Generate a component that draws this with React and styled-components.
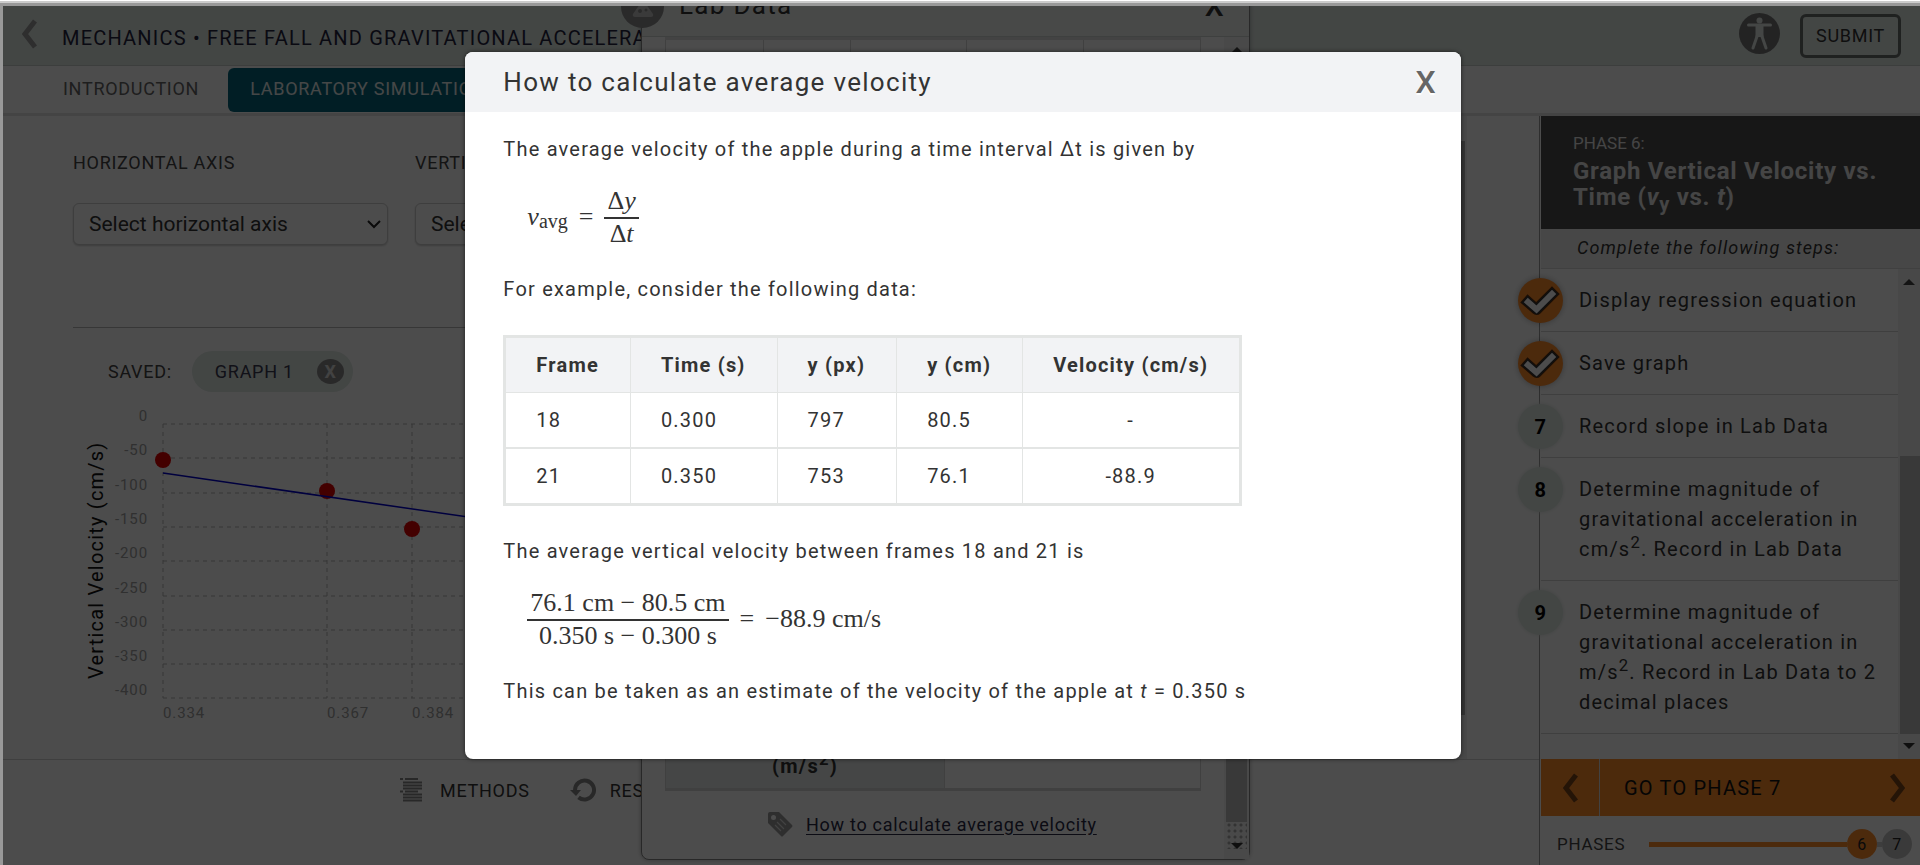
import React from 'react';
import styled, { createGlobalStyle, css } from 'styled-components';

//

const steps = [
  { id: 5, done: true, text: 'Display regression equation' },
  { id: 6, done: true, text: 'Save graph' },
  { id: 7, text: 'Record slope in Lab Data' },
  {
    id: 8,
    text: (
      <>
        Determine magnitude of gravitational acceleration in cm/s<sup>2</sup>.
        Record in Lab Data
      </>
    ),
  },
  {
    id: 9,
    text: (
      <>
        Determine magnitude of gravitational acceleration in m/s<sup>2</sup>.
        Record in Lab Data to 2 decimal places
      </>
    ),
  },
];

const rows = [
  ['18', '0.300', '797', '80.5', '-'],
  ['21', '0.350', '753', '76.1', '-88.9'],
];

const yTicks = [0, -50, -100, -150, -200, -250, -300, -350, -400];
const xTicks = [
  { label: '0.334', x: 90 },
  { label: '0.367', x: 254 },
  { label: '0.384', x: 339 },
];
const points = [
  [90, 51],
  [254, 82],
  [339, 120],
];

const tickY = (i) => 15 + Math.round(i * 34.3);

const Chevron = ({ flip, size = 30 }) => (
  <svg width={size / 2} height={size} viewBox="0 0 15 30" aria-hidden="true">
    <path
      d={flip ? 'M2 2l10 13L2 28' : 'M13 2L3 15l10 13'}
      fill="none"
      stroke="currentColor"
      strokeWidth="5"
    />
  </svg>
);

const Check = () => (
  <svg width="45" height="45" viewBox="0 0 45 45" aria-hidden="true">
    <g fill="none" strokeLinecap="square">
      <path
        d="M10 24l8.500 7.500L34 16"
        stroke="#5a3010"
        strokeWidth="11"
        strokeLinejoin="round"
      />
      <path
        d="M10 24l8.500 7.500L34 16"
        stroke="#333"
        strokeWidth="9"
        strokeLinejoin="round"
      />
      <path d="M10 24l8.500 7.500L34 16" stroke="#fff" strokeWidth="6" />
    </g>
  </svg>
);

const Chart = () => (
  <ChartSvg role="img" aria-label="Vertical velocity against time">
    <text className="title" transform="translate(30 270) rotate(-90)">
      Vertical Velocity (cm/s)
    </text>
    {yTicks.map((tick, i) => (
      <g key={tick}>
        <line className="grid" x1="90" x2="100%" y1={tickY(i)} y2={tickY(i)} />
        <text className="tick" x="75" y={tickY(i) - 3} textAnchor="end">
          {tick}
        </text>
      </g>
    ))}
    {xTicks.map(({ label, x }) => (
      <g key={label}>
        <line className="grid" x1={x} x2={x} y1="15" y2="289" />
        <text className="tick" x={x} y="309">
          {label}
        </text>
      </g>
    ))}
    {points.map(([x, y]) => (
      <circle key={x} cx={x} cy={y} r="8" fill="#e00000" />
    ))}
    <line x1="90" y1="64" x2="700" y2="152" stroke="#0000d0" strokeWidth="1.5" />
  </ChartSvg>
);

const LabData = () => (
  <LabPanel aria-label="Lab Data">
    <LabBadge>
      <svg width="22" height="20" viewBox="0 0 22 20" aria-hidden="true">
        <path d="M8 0h6v7l7 10q1 3-2 3H3q-3 0-2-3L8 7z" fill="#c4c4c4" />
        <circle cx="8" cy="14" r="2" fill="#8c8c8c" />
        <circle cx="14" cy="13" r="1.500" fill="#8c8c8c" />
      </svg>
    </LabBadge>
    <LabHeader>
      <h2>Lab Data</h2>
      <button type="button" aria-label="Close Lab Data">
        X
      </button>
    </LabHeader>
    <LabContent>
      <LabGrid>
        <LabColumns>
          <i />
          <i />
          <i />
          <i />
          <i />
        </LabColumns>
        <LabResult>
          <strong>
            (m/s<sup>2</sup>)
          </strong>
          <span />
        </LabResult>
        <LabLink>
          <svg width="25" height="25" viewBox="0 0 25 25" aria-hidden="true">
            <path
              d="M2 0h9l13 13q1 1 0 2l-9 9q-1 1-2 0L0 11V2q0-2 2-2z"
              fill="#999"
            />
            <circle cx="5.500" cy="5.500" r="2.500" fill="#fff" />
            <path
              d="M12 7l6 6M9 10l7 7M7 13l6 6"
              stroke="#ddd"
              strokeWidth="1.200"
            />
          </svg>
          <a href="#average-velocity">How to calculate average velocity</a>
        </LabLink>
      </LabGrid>
      <LabRail>
        <Arrow $up />
        <span />
        <Grip>
          <Arrow />
        </Grip>
      </LabRail>
    </LabContent>
  </LabPanel>
);

const Sidebar = () => (
  <Aside>
    <PhaseHeader>
      <p>PHASE 6:</p>
      <h2>
        Graph Vertical Velocity vs. Time (<em>v</em>
        <sub>y</sub> vs. <em>t</em>)
      </h2>
    </PhaseHeader>
    <Hint>Complete the following steps:</Hint>
    <StepsArea>
      <Steps>
        {steps.map(({ id, done, text }) => (
          <li key={id}>
            <StepBadge $done={done}>{done ? <Check /> : id}</StepBadge>
            <p>{text}</p>
          </li>
        ))}
      </Steps>
      <StepsRail>
        <Arrow $up />
        <span />
        <Arrow />
      </StepsRail>
    </StepsArea>
    <PhaseNav>
      <button type="button" aria-label="Previous phase">
        <Chevron />
      </button>
      <button type="button">
        GO TO PHASE 7
        <Chevron flip />
      </button>
    </PhaseNav>
    <Phases>
      <span>PHASES</span>
      <i />
      <button type="button">6</button>
      <b />
      <button type="button">7</button>
    </Phases>
  </Aside>
);

const Modal = () => (
  <Overlay>
    <Dialog role="dialog" aria-labelledby="modal-title">
      <DialogHeader>
        <h1 id="modal-title">How to calculate average velocity</h1>
        <button type="button" aria-label="Close">
          X
        </button>
      </DialogHeader>
      <DialogBody>
        <p>
          The average velocity of the apple during a time interval Δt is given
          by
        </p>
        <Formula>
          <span>
            <em>v</em>
            <sub>avg</sub>
          </span>
          <span>=</span>
          <Fraction>
            <span>
              Δ<em>y</em>
            </span>
            <span>
              Δ<em>t</em>
            </span>
          </Fraction>
        </Formula>
        <p>For example, consider the following data:</p>
        <Table>
          <thead>
            <tr>
              <th>Frame</th>
              <th>Time (s)</th>
              <th>y (px)</th>
              <th>y (cm)</th>
              <th>Velocity (cm/s)</th>
            </tr>
          </thead>
          <tbody>
            {rows.map((row) => (
              <tr key={row[0]}>
                {row.map((cell) => (
                  <td key={cell}>{cell}</td>
                ))}
              </tr>
            ))}
          </tbody>
        </Table>
        <p>The average vertical velocity between frames 18 and 21 is</p>
        <Formula>
          <Fraction>
            <span>76.1 cm − 80.5 cm</span>
            <span>0.350 s − 0.300 s</span>
          </Fraction>
          <span>=</span>
          <span>−88.9 cm/s</span>
        </Formula>
        <p>
          This can be taken as an estimate of the velocity of the apple at{' '}
          <em>t</em> = 0.350 s
        </p>
      </DialogBody>
    </Dialog>
  </Overlay>
);

const App = () => (
  <Page>
    <GlobalStyle />
    <Frame>
      <Header>
        <button type="button" aria-label="Back">
          <Chevron />
        </button>
        <h1>MECHANICS • FREE FALL AND GRAVITATIONAL ACCELERATION</h1>
        <button type="button" aria-label="Accessibility">
          <svg width="41" height="41" viewBox="0 0 41 41" aria-hidden="true">
            <circle cx="20.500" cy="20.500" r="20.500" fill="#777" />
            <circle cx="20.500" cy="7.500" r="3" fill="#e3e9e6" />
            <path
              d="M9.500 12h22M18.500 22l-4.500 13M22.500 22l4.500 13"
              fill="none"
              stroke="#e3e9e6"
              strokeWidth="3"
              strokeLinecap="round"
            />
            <path d="M16.500 12h8v12h-8z" fill="#e3e9e6" />
          </svg>
        </button>
        <SubmitButton type="button">SUBMIT</SubmitButton>
      </Header>
      <Tabs>
        <a href="#introduction">INTRODUCTION</a>
        <a href="#laboratory" className="active">
          LABORATORY SIMULATION
        </a>
      </Tabs>
      <Body>
        <Main>
          <Workspace>
            <Content>
              <Axes>
                <label>
                  HORIZONTAL AXIS
                  <select>
                    <option>Select horizontal axis</option>
                  </select>
                </label>
                <label>
                  VERTICAL AXIS
                  <select>
                    <option>Select vertical axis</option>
                  </select>
                </label>
              </Axes>
              <Saved>
                <span>SAVED:</span>
                <SavedPill>
                  GRAPH 1
                  <button type="button" aria-label="Remove graph 1">
                    X
                  </button>
                </SavedPill>
              </Saved>
              <Chart />
            </Content>
            <MainRail>
              <span />
            </MainRail>
          </Workspace>
          <Toolbar>
            <button type="button">
              <svg width="23" height="24" viewBox="0 0 23 24" aria-hidden="true">
                <path
                  d="M0 1h3M5 1h13M3 4.500h19M3 7.500h19M3 10.500h19M0 13.500h3M5 13.500h13M3 16.500h19M3 19.500h19M3 22.500h19"
                  stroke="#888"
                  strokeWidth="1.800"
                />
              </svg>
              METHODS
            </button>
            <button type="button">
              <svg width="26" height="24" viewBox="0 0 26 24" aria-hidden="true">
                <path
                  d="M5 12a9.500 9.500 0 1 1 3.500 7.400"
                  fill="none"
                  stroke="#888"
                  strokeWidth="4"
                />
                <path d="M0 12h11l-5 6z" fill="#888" />
              </svg>
              RESET
            </button>
          </Toolbar>
        </Main>
        <Sidebar />
      </Body>
      <LabData />
    </Frame>
    <Modal />
  </Page>
);

export default App;

//

const GlobalStyle = createGlobalStyle`
  * {
    box-sizing: border-box;
  }

  body {
    margin: 0;
    background: #fff;
    color: #333;
    font-family: Roboto, sans-serif;
    font-size: 18px;
    letter-spacing: 0.04em;
  }

  h1, h2, p, ul {
    margin: 0;
    padding: 0;
    font-weight: 400;
    letter-spacing: 0.04em;
  }

  button {
    padding: 0;
    border: 0;
    background: none;
    color: inherit;
    font: inherit;
    letter-spacing: 0.04em;
    cursor: pointer;
  }

  sup, sub {
    line-height: 0;
  }
`;

const Page = styled.div`
  position: relative;
  display: flex;
  flex-direction: column;
  height: calc(100vh - 1px);
  margin-top: 1px;
  border-top: 2px solid #ccc;
  overflow: hidden;
`;

const Frame = styled.div`
  position: relative;
  display: flex;
  flex: 1;
  flex-direction: column;
  min-height: 0;
  border-top: 3px solid #999;
  border-left: 3px solid #999;
`;

const Header = styled.header`
  display: flex;
  flex-shrink: 0;
  align-items: center;
  height: 60px;
  padding: 0 19px;
  border-bottom: 1px solid #c9cfcc;
  background: #e0e9e4;
  color: #999;

  & h1 {
    flex: 1;
    padding: 5px 0 0 25px;
    color: #24243e;
    font-size: 20px;
    letter-spacing: 0.06em;
  }
`;

const SubmitButton = styled.button`
  height: 44px;
  margin-left: 20px;
  padding: 0 13px;
  border: 3px solid #6a6e6c;
  border-radius: 6px;
  color: #333;
  font-size: 18px;
`;

const Tabs = styled.nav`
  display: flex;
  flex-shrink: 0;
  height: 50px;
  padding: 2px 0 1px 30px;
  border-bottom: 3px solid #e4e4e4;

  & a {
    display: flex;
    align-items: center;
    padding: 0 29px 3px 30px;
    color: #666;
    text-decoration: none;
  }

  & .active {
    padding: 0 22px 3px;
    border-radius: 6px;
    background: #04667d;
    color: #e8eeee;
  }
`;

const Body = styled.div`
  display: flex;
  flex: 1;
  min-height: 0;
`;

const Main = styled.main`
  display: flex;
  flex: 1;
  flex-direction: column;
  min-width: 0;
`;

const Workspace = styled.div`
  display: flex;
  flex: 1;
  gap: 16px;
  min-height: 0;
  padding: 0 72px 0 70px;
`;

const Content = styled.div`
  display: flex;
  flex: 1;
  flex-direction: column;
  min-width: 0;
`;

const Axes = styled.div`
  display: flex;
  gap: 27px;
  height: 212px;
  padding-top: 36px;
  border-bottom: 1px solid #b8b8b8;

  & label {
    width: 315px;
    color: #444;
    line-height: 22px;
    letter-spacing: 0.04em;
  }

  & select {
    display: block;
    width: 100%;
    height: 42px;
    margin-top: 29px;
    padding: 0 15px;
    border: 1px solid #d0d0d0;
    border-radius: 6px;
    appearance: none;
    background: #fff
      url("data:image/svg+xml,%3Csvg xmlns='http://www.w3.org/2000/svg' width='14' height='10'%3E%3Cpath d='M1 2l6 6 6-6' fill='none' stroke='%23222' stroke-width='2'/%3E%3C/svg%3E")
      no-repeat right 6px center;
    box-shadow: 0 1px 2px rgba(0, 0, 0, 0.2);
    color: #333;
    font-family: inherit;
    font-size: 21px;
    letter-spacing: normal;
  }
`;

const Saved = styled.div`
  display: flex;
  align-items: center;
  gap: 20px;
  padding: 23px 0 17px 35px;
  color: #444;
`;

const SavedPill = styled.div`
  display: flex;
  align-items: center;
  gap: 23px;
  height: 41px;
  padding: 0 9px 0 23px;
  border-radius: 21px;
  background: #e0e9e4;
  color: #3a3a50;

  & button {
    width: 27px;
    height: 25px;
    border-radius: 50%;
    background: #8a8a8a;
    color: #ddd;
    font-weight: 700;
    letter-spacing: 0;
  }
`;

const ChartSvg = styled.svg`
  width: 100%;
  height: 330px;
  font-size: 15px;

  & .grid {
    stroke: #b4b4b4;
    stroke-dasharray: 4 4;
  }

  & .tick {
    fill: #a0a0a0;
    letter-spacing: 0.06em;
  }

  & .title {
    fill: #111;
    font-size: 20px;
    letter-spacing: 0.06em;
  }
`;

const MainRail = styled.div`
  width: 22px;
  padding: 25px 2px 44px;
  background: #f0f0f0;

  & span {
    display: block;
    height: 100%;
    background: #b0b0b0;
  }
`;

const Toolbar = styled.div`
  display: flex;
  flex-shrink: 0;
  gap: 40px;
  height: 106px;
  padding: 18px 397px;
  border-top: 1px solid #d4d4d4;

  & button {
    display: flex;
    align-items: center;
    gap: 17px;
    height: 24px;
  }

  & button + button {
    gap: 14px;
  }
`;

const Aside = styled.aside`
  display: flex;
  flex-direction: column;
  width: 381px;
  border-left: 1px solid #999;
`;

const PhaseHeader = styled.div`
  height: 113px;
  margin-left: 1px;
  padding: 17px 32px 0;
  background: #4d4d4d;
  color: #e6e6e6;

  & p {
    font-size: 17px;
    line-height: 20px;
    letter-spacing: normal;
  }

  & h2 {
    margin-top: 5px;
    font-weight: 700;
    font-size: 24px;
    line-height: 26px;
    letter-spacing: 0.03em;
  }
`;

const Hint = styled.p`
  height: 40px;
  margin-left: 1px;
  padding-left: 36px;
  border-bottom: 1px solid #d8d8d8;
  background: #efefef;
  font-style: italic;
  line-height: 38px;
  letter-spacing: 0.06em;
`;

const StepsArea = styled.div`
  display: flex;
  flex: 1;
  min-height: 0;
`;

const Steps = styled.ul`
  flex: 1;
  list-style: none;

  & li {
    display: flex;
    gap: 16px;
    margin-left: -22px;
    padding: 16px 0;
    background: linear-gradient(#d4d4d4, #d4d4d4) 23px 100% / 100% 1px no-repeat;
  }

  & li > p {
    flex: 1;
    padding-bottom: 1px;
    font-size: 20px;
    line-height: 30px;
    letter-spacing: 0.06em;
  }
`;

const StepBadge = styled.span`
  display: flex;
  align-items: center;
  justify-content: center;
  width: 45px;
  height: 45px;
  margin: -7px 0 -8px;
  border-radius: 50%;
  background: #e0e9e4;
  box-shadow: 0 0 4px #dde4e0;
  color: #000;
  font-weight: 700;
  font-size: 20px;

  ${({ $done }) =>
    $done &&
    css`
      background: #ff8c2b;
      box-shadow: 0 0 6px rgba(0, 0, 0, 0.3);
    `}
`;

const Arrow = styled.i`
  border: 6px solid transparent;
  border-top: 6px solid #333;
  border-bottom: 0;

  ${({ $up }) =>
    $up &&
    css`
      border-top: 0;
      border-bottom: 6px solid #444;
    `}
`;

const StepsRail = styled.div`
  display: flex;
  flex-direction: column;
  align-items: center;
  width: 22px;
  padding: 10px 0;
  background: #f0f0f0;

  & span {
    width: 20px;
    margin: auto 0 9px 2px;
    height: 278px;
    background: #c0c0c0;
  }
`;

const PhaseNav = styled.div`
  display: flex;
  height: 57px;
  margin-left: 1px;
  background: #ff8c2b;
  color: #111;

  & button {
    display: flex;
    align-items: center;
    justify-content: center;
    width: 59px;
    border-right: 1px solid #ddd;
  }

  & button + button {
    flex: 1;
    justify-content: space-between;
    padding: 0 15px 0 24px;
    border: 0;
    font-size: 20px;
    letter-spacing: 0.06em;
  }

  & svg {
    color: #7a4518;
  }
`;

const Phases = styled.div`
  display: flex;
  align-items: center;
  height: 49px;
  padding: 7px 8px 0 17px;
  color: #444;
  font-size: 17px;

  & i {
    flex: 1;
    height: 5px;
    margin-left: 24px;
    background: #ff8c2b;
  }

  & b {
    width: 5px;
    height: 5px;
    background: #ccc;
  }

  & button {
    width: 30px;
    height: 30px;
    border-radius: 50%;
    background: #c4c4c4;
    color: #222;
    font-size: 16px;
  }

  & i + button {
    background: #ff8c2b;
  }
`;

/* floating window, dragged partly above the page top */
const LabPanel = styled.section`
  position: absolute;
  top: -30px;
  left: 638px;
  display: flex;
  flex-direction: column;
  width: 609px;
  height: 884px;
  border: 1px solid #888;
  border-radius: 8px;
  background: #fff;
  box-shadow: 0 0 4px rgba(0, 0, 0, 0.3);
  clip-path: inset(30px -10px -10px -30px);
`;

const LabBadge = styled.span`
  position: absolute;
  top: 8px;
  left: -21px;
  display: flex;
  align-items: center;
  justify-content: center;
  width: 43px;
  height: 43px;
  border-radius: 50%;
  background: #8c8c8c;
`;

const LabHeader = styled.div`
  display: flex;
  flex-shrink: 0;
  align-items: flex-end;
  justify-content: space-between;
  height: 60px;
  padding: 0 24px 16px 37px;
  border-bottom: 1px solid #d0d6d3;
  background: #f0f4f2;

  & h2 {
    font-size: 26px;
    line-height: 30px;
    letter-spacing: 0.05em;
  }

  & button {
    font-weight: 500;
    font-size: 30px;
    line-height: 28px;
  }
`;

const LabContent = styled.div`
  display: flex;
  flex: 1;
  min-height: 0;
`;

const LabGrid = styled.div`
  display: flex;
  flex: 1;
  flex-direction: column;
  padding: 0 23px;
`;

const LabColumns = styled.div`
  display: grid;
  flex: 1;
  grid-template-columns: 98fr 87fr 117fr 117fr 117fr;
  border-top: 3px solid #e0e0e0;
  border-right: 1px solid #d8d8d8;

  & i {
    border-left: 1px solid #d8d8d8;
  }
`;

const LabResult = styled.div`
  display: grid;
  grid-template-columns: 280fr 256fr;
  border: 1px solid #d8d8d8;
  border-bottom-width: 3px;

  & strong {
    padding: 46px 0 10px;
    background: #e6ebe9;
    border-right: 1px solid #d8d8d8;
    font-size: 20px;
    letter-spacing: 0.06em;
    text-align: center;
  }
`;

const LabLink = styled.div`
  display: flex;
  align-items: center;
  gap: 13px;
  height: 68px;
  padding: 0 0 2px 103px;

  & a {
    color: #2b2b45;
    text-underline-offset: 3px;
  }
`;

const LabRail = styled.div`
  display: flex;
  flex-direction: column;
  align-items: center;
  width: 25px;
  padding: 10px 0;
  background: #f4f4f4;

  & span {
    flex: 1;
    width: 21px;
    margin-top: 8px;
    background: #c0c0c0;
  }
`;

const Grip = styled.div`
  display: flex;
  align-items: flex-end;
  justify-content: center;
  width: 21px;
  height: 27px;
  background: radial-gradient(circle, #aaa 1px, transparent 2px) 0 0 / 6px 6px;
`;

const Overlay = styled.div`
  position: absolute;
  inset: 3px 0 0 3px;
  display: flex;
  justify-content: center;
  align-items: flex-start;
  padding: 46px 0 0 3px;
  background: rgba(0, 0, 0, 0.7);
`;

const Dialog = styled.div`
  width: 52%;
  border-radius: 8px;
  background: #fff;
  box-shadow: 0 0 4px rgba(0, 0, 0, 0.6);
  color: #333;
  overflow: hidden;
`;

const DialogHeader = styled.div`
  display: flex;
  align-items: center;
  justify-content: space-between;
  height: 60px;
  padding: 0 25px 0 38px;
  background: #f2f3f5;

  & h1 {
    font-size: 26px;
    letter-spacing: 0.05em;
  }

  & button {
    color: #666;
    font-weight: 500;
    font-size: 32px;
    letter-spacing: 0;
    text-shadow: 0 2px 1px #fff;
  }
`;

const DialogBody = styled.div`
  padding: 22px 38px 53px;
  font-size: 20px;
  line-height: 30px;
  letter-spacing: 0.06em;

  & p {
    letter-spacing: inherit;
  }
`;

const Formula = styled.div`
  display: flex;
  align-items: center;
  gap: 11px;
  height: 110px;
  padding: 0 0 4px 24px;
  font-family: 'Liberation Serif', serif;
  font-size: 26px;
  line-height: 30px;
  letter-spacing: normal;

  & sub {
    font-size: 20px;
    vertical-align: -3px;
  }
`;

const Fraction = styled.span`
  display: flex;
  flex-direction: column;
  text-align: center;

  & span {
    padding: 0 3px;
  }

  & span:first-child {
    padding-bottom: 1px;
    border-bottom: 2px solid #333;
  }
`;

const Table = styled.table`
  margin: 31px 0 30px;
  border: 3px solid #e3e5e4;
  border-collapse: collapse;

  & th,
  & td {
    padding: 12px 31px 12px 30px;
    border: 1px solid #e3e5e4;
    text-align: left;
  }

  & th {
    background: #f2f3f5;
    font-weight: 700;
  }

  & td:last-child {
    text-align: center;
  }

  & tbody tr + tr td {
    border-top-width: 2px;
  }
`;
